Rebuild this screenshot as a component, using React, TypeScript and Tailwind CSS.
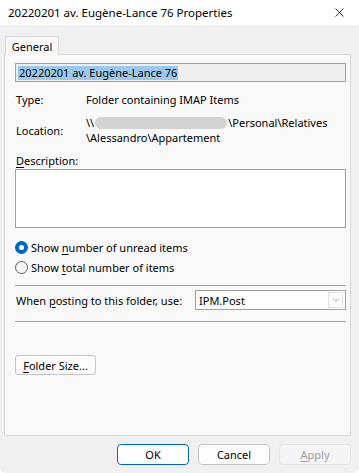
import { X, ChevronDown } from "lucide-react";

const font = { fontFamily: '"Segoe UI", "Noto Sans", "Open Sans", sans-serif' };

function Radio({ checked, label, u, rest }: { checked?: boolean; label: string; u: string; rest: string }) {
  return (
    <div className="flex h-[20px] items-center gap-[3px]">
      {checked ? (
        <span className="flex h-[13px] w-[13px] items-center justify-center rounded-full bg-[#0067c0]">
          <span className="h-[5px] w-[5px] rounded-full bg-white" />
        </span>
      ) : (
        <span className="h-[13px] w-[13px] rounded-full border border-[#5f5f5f] bg-[#f6f6f6]" />
      )}
      <span>
        {label}
        <span className="underline underline-offset-2">{u}</span>
        {rest}
      </span>
    </div>
  );
}

export default function App() {
  return (
    <div
      className="flex h-[473px] w-[359px] flex-col overflow-hidden rounded-b-[6px] bg-[#f0f0f0] text-[11px] leading-[15px] text-black"
      style={font}
    >
      {/* title bar */}
      <div className="flex h-[25px] shrink-0 items-center justify-between bg-white pl-[8px] pr-[12px]">
        <span className="text-[11.5px]">20220201 av. Eugène-Lance 76 Properties</span>
        <X className="h-[15px] w-[15px]" strokeWidth={1.2} />
      </div>

      {/* tabs */}
      <div className="flex h-[29px] shrink-0 items-end pl-[5px]">
        <div className="relative z-10 -mb-px flex h-[19px] w-[54px] items-center justify-center border border-b-0 border-[#d9d9d9] bg-[#f9f9f9]">
          General
        </div>
      </div>

      {/* panel */}
      <div className="ml-[4px] mr-[8px] flex h-[382px] flex-col border border-[#d9d9d9] bg-[#f9f9f9] pl-[10px] pr-[4px] pt-[8px]">
        <div className="flex h-[19px] items-center border border-[#a0a0a0] bg-[#efefef] px-[2px]">
          <span className="bg-[#99c9ef] px-px leading-[14px]">20220201 av. Eugène-Lance 76</span>
        </div>

        <div className="mt-[10px] flex">
          <span className="w-[71px] pl-px">Type:</span>
          <span>Folder containing IMAP Items</span>
        </div>

        <div className="mt-[8px] flex items-center">
          <span className="w-[71px] pl-px">Location:</span>
          <div className="flex flex-col">
            <div className="flex items-center">
              <span>\\</span>
              <span className="mx-[1px] h-[12px] w-[132px] rounded-full bg-[#d3d3d3]" />
              <span>\Personal\Relatives</span>
            </div>
            <span>\Alessandro\Appartement</span>
          </div>
        </div>

        <div className="mt-[8px] pl-px">
          <span className="underline underline-offset-2">D</span>escription:
        </div>
        <div className="mt-[1px] h-[59px] border border-[#a0a0a0] bg-white" />

        <div className="mt-[9px] flex flex-col">
          <Radio checked label="Show " u="n" rest="umber of unread items" />
          <Radio label="Show " u="t" rest="otal number of items" />
        </div>

        <div className="mt-[8px] h-px bg-[#a0a0a0]" />

        <div className="mt-[4px] flex items-center justify-between">
          <span className="pl-px">
            When <span className="underline underline-offset-2">p</span>osting to this folder, use:
          </span>
          <div className="flex h-[20px] w-[151px] items-center justify-between border border-[#a0a0a0] bg-white pl-[3px] pr-[2px]">
            <span>IPM.Post</span>
            <span className="flex h-[16px] w-[15px] items-center justify-center border border-[#e0e0e0]">
              <ChevronDown className="h-[10px] w-[10px] text-[#606060]" strokeWidth={1.5} />
            </span>
          </div>
        </div>

        <div className="mt-[11px] h-px bg-[#a0a0a0]" />

        <button className="mt-[33px] flex h-[20px] w-[81px] items-center justify-center rounded-[3px] border border-[#c5c5c5] bg-[#fdfdfd]">
          <span>
            <span className="underline underline-offset-2">F</span>older Size...
          </span>
        </button>
      </div>

      {/* bottom buttons */}
      <div className="mt-[8px] flex justify-end gap-[9px] pr-[8px]">
        <button className="flex h-[21px] w-[72px] items-center justify-center rounded-[4px] border-[1.5px] border-[#0067c0] bg-[#fdfdfd]">
          OK
        </button>
        <button className="flex h-[21px] w-[72px] items-center justify-center rounded-[4px] border border-[#c5c5c5] bg-[#fdfdfd]">
          Cancel
        </button>
        <button className="flex h-[21px] w-[72px] items-center justify-center rounded-[4px] border border-[#e5e5e5] bg-[#f5f5f5] text-[#a0a0a0]">
          <span>
            <span className="underline underline-offset-2">A</span>pply
          </span>
        </button>
      </div>
    </div>
  );
}
